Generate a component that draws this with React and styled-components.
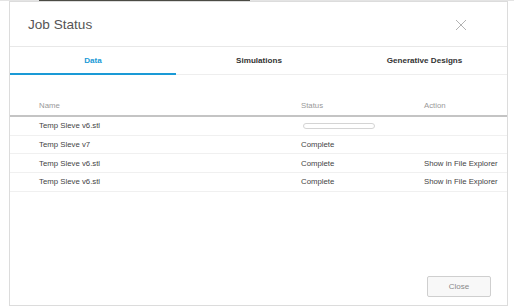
import React from "react";
import styled, { createGlobalStyle } from "styled-components";

const GlobalStyle = createGlobalStyle`
  html, body {
    margin: 0;
    padding: 0;
    background: #ffffff;
    font-family: "Liberation Sans", Arial, sans-serif;
  }
`;

const Page = styled.div`
  width: 514px;
  height: 307px;
  overflow: hidden;
  position: relative;
`;

/* strip of the app behind the dialog */
const BackStrip = styled.div`
  height: 1px;
  display: flex;
  background: #e4e4e4;
  span {
    margin-left: 39px;
    width: 211px;
    background: #4a4a44;
  }
`;

const Dialog = styled.div`
  margin-left: 9px;
  width: 497px;
  height: 303px;
  border: 1px solid #dcdcdc;
  background: #fff;
  display: flex;
  flex-direction: column;
  position: relative;
`;

const Header = styled.div`
  height: 45px;
  border-bottom: 1px solid #e8e8e8;
  display: flex;
  align-items: center;
  justify-content: space-between;
  padding: 0 40px 0 18px;
  box-sizing: border-box;
`;

const Title = styled.div`
  font-size: 13.6px;
  color: #555;
  padding-top: 1px;
`;

const CloseX = styled.button`
  border: none;
  background: none;
  padding: 0;
  width: 12px;
  height: 12px;
  display: flex;
  cursor: pointer;
  margin-top: 2px;
`;

const Tabs = styled.div`
  display: grid;
  grid-template-columns: 166px 166px 1fr;
  height: 27px;
  border-bottom: 1px solid #eeeeee;
`;

const Tab = styled.div`
  display: flex;
  align-items: center;
  justify-content: center;
  font-size: 8.1px;
  font-weight: bold;
  color: ${(p) => (p.active ? "#1a9ad6" : "#333")};
  border-bottom: 2px solid ${(p) => (p.active ? "#1a9ad6" : "transparent")};
  margin-bottom: -1px;
`;

const Body = styled.div`
  flex: 1;
  padding-top: 20px;
`;

const Row = styled.div`
  display: grid;
  grid-template-columns: 291px 123px 1fr;
  height: ${(p) => (p.head ? "20px" : "17.7px")};
  align-items: center;
  border-bottom: ${(p) => (p.head ? "2px solid #c4c4c4" : "1px solid #f0f0f0")};
  font-size: 7.8px;
  color: ${(p) => (p.head ? "#999" : "#444")};
`;

const Cell = styled.div`
  padding-left: ${(p) => (p.first ? "29px" : "0")};
  white-space: nowrap;
`;

const Progress = styled.div`
  width: 70px;
  height: 4px;
  border: 1px solid #d4d4d4;
  border-radius: 3px;
  margin-left: 2px;
`;

const Footer = styled.div`
  display: flex;
  justify-content: flex-end;
  padding: 0 16px 8px 0;
`;

const Button = styled.button`
  width: 64px;
  height: 21px;
  border: 1px solid #cfcfcf;
  border-radius: 2px;
  background: #f8f8f8;
  color: #888;
  font-family: "Liberation Sans", Arial, sans-serif;
  font-size: 8px;
  cursor: pointer;
`;

const Grip = styled.div`
  position: absolute;
  right: 2px;
  bottom: 2px;
  width: 4px;
  height: 4px;
  background: radial-gradient(circle, #bbb 0.6px, transparent 0.7px) 0 0 / 2px 2px;
`;

const rows = [
  { name: "Temp Sleve v6.stl", status: null, action: "" },
  { name: "Temp Sleve v7", status: "Complete", action: "" },
  { name: "Temp Sleve v6.stl", status: "Complete", action: "Show in File Explorer" },
  { name: "Temp Sleve v6.stl", status: "Complete", action: "Show in File Explorer" },
];

export default function App() {
  return (
    <Page>
      <GlobalStyle />
      <BackStrip>
        <span />
      </BackStrip>
      <Dialog>
        <Header>
          <Title>Job Status</Title>
          <CloseX aria-label="close">
            <svg width="12" height="12" viewBox="0 0 12 12">
              <path d="M1 1L11 11M11 1L1 11" stroke="#aaa" strokeWidth="0.9" />
            </svg>
          </CloseX>
        </Header>
        <Tabs>
          <Tab active>Data</Tab>
          <Tab>Simulations</Tab>
          <Tab>Generative Designs</Tab>
        </Tabs>
        <Body>
          <Row head>
            <Cell first>Name</Cell>
            <Cell>Status</Cell>
            <Cell>Action</Cell>
          </Row>
          {rows.map((r, i) => (
            <Row key={i}>
              <Cell first>{r.name}</Cell>
              <Cell>{r.status ? r.status : <Progress />}</Cell>
              <Cell>{r.action}</Cell>
            </Row>
          ))}
        </Body>
        <Footer>
          <Button>Close</Button>
        </Footer>
        <Grip />
      </Dialog>
    </Page>
  );
}
